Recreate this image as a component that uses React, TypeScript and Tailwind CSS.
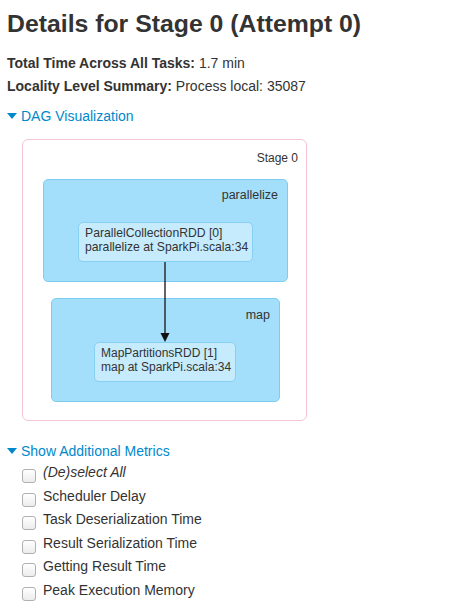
import React from 'react';

const metrics = [
  { label: '(De)select All', italic: true },
  { label: 'Scheduler Delay' },
  { label: 'Task Deserialization Time' },
  { label: 'Result Serialization Time' },
  { label: 'Getting Result Time' },
  { label: 'Peak Execution Memory' },
];

const Caret = () => (
  <svg width="10" height="6" viewBox="0 0 10 6" className="mr-[4px] mb-[2px] inline-block">
    <path d="M0 0 L10 0 L5 6 Z" fill="#0088cc" />
  </svg>
);

// DAG drawing: clusters and RDD nodes sit on a free canvas
const DagViz = () => (
  <div className="relative ml-[15px] mt-[11px] w-[285px] h-[282px] rounded-[6px] border border-[#f5c6d2] bg-white text-[#333]">
    <span className="absolute right-[8px] top-[11px] text-[12px] leading-[14px]">Stage 0</span>

    <div className="absolute left-[20px] top-[39px] w-[245px] h-[103px] rounded-[5px] border border-[#7fccf2] bg-[#a3dffb]">
      <span className="absolute right-[9px] top-[8px] text-[12.5px] leading-[14px]">parallelize</span>
    </div>

    <div className="absolute left-[28px] top-[158px] w-[229px] h-[104px] rounded-[5px] border border-[#7fccf2] bg-[#a3dffb]">
      <span className="absolute right-[9px] top-[9px] text-[12.5px] leading-[14px]">map</span>
    </div>

    <div className="absolute left-[55px] top-[82px] w-[175px] h-[40px] rounded-[5px] border border-[#86d0f3] bg-[#c6ebfd] px-[6px] pt-[4px] text-[12.2px] leading-[13.5px] whitespace-nowrap">
      <div>ParallelCollectionRDD [0]</div>
      <div>parallelize at SparkPi.scala:34</div>
    </div>

    <div className="absolute left-[71px] top-[202px] w-[142px] h-[40px] rounded-[5px] border border-[#86d0f3] bg-[#c6ebfd] px-[6px] pt-[4px] text-[12px] leading-[13.5px] whitespace-nowrap">
      <div>MapPartitionsRDD [1]</div>
      <div>map at SparkPi.scala:34</div>
    </div>

    <svg className="absolute left-[136px] top-[122px]" width="12" height="80" viewBox="0 0 12 80">
      <line x1="6" y1="0" x2="6" y2="72" stroke="#222" strokeWidth="1.4" />
      <path d="M1.5 71 L10.5 71 L6 80 Z" fill="#111" />
    </svg>
  </div>
);

export default function App() {
  return (
    <div className="pl-[7px] pt-[9px] text-[#333] bg-white min-h-screen" style={{ fontFamily: '"Liberation Sans", Arial, sans-serif' }}>
      <h3 className="text-[24.8px] leading-[30px] font-bold">Details for Stage 0 (Attempt 0)</h3>

      <div className="mt-[13px] flex flex-col text-[14px] leading-[23px]">
        <div>
          <strong>Total Time Across All Tasks:</strong> 1.7 min
        </div>
        <div>
          <strong>Locality Level Summary:</strong> Process local: 35087
        </div>
      </div>

      <div className="mt-[7px] text-[14px] leading-[23px] text-[#0088cc]">
        <Caret />
        DAG Visualization
      </div>

      <DagViz />

      <div className="mt-[21px] text-[14px] leading-[19px] text-[#0088cc]">
        <Caret />
        Show Additional Metrics
      </div>

      <div className="ml-[15px] flex flex-col text-[14px]">
        {metrics.map((m) => (
          <div key={m.label} className="flex items-start h-[23.5px]">
            <span className="mt-[8px] w-[14px] h-[14px] rounded-[3px] border border-[#b0b0b0] bg-gradient-to-b from-white to-[#ececec] shrink-0" />
            <span className={`ml-[7px] leading-[23.5px] ${m.italic ? 'italic' : ''}`}>{m.label}</span>
          </div>
        ))}
      </div>
    </div>
  );
}
